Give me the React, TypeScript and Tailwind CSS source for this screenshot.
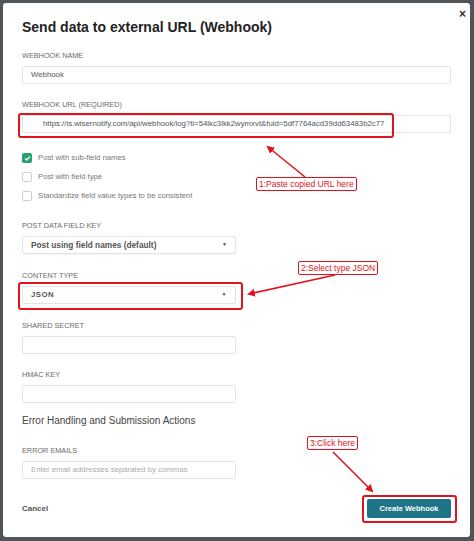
import React from 'react';

const label = 'block text-[7.3px] leading-[12px] uppercase text-[#6b6b6b]';
const input = 'h-[18px] border border-[#e4e4e4] rounded-[2px] bg-white px-2 flex items-center text-[7.8px] text-[#555]';

function Caret() {
  return <span className="ml-auto text-[5px] text-[#444]">▼</span>;
}

function Check({ on, text }: { on?: boolean; text: string }) {
  return (
    <div className="flex items-center h-[12px]">
      <span
        className={
          on
            ? 'w-[10px] h-[10px] rounded-[2px] bg-[#27a16e] flex items-center justify-center'
            : 'w-[10px] h-[10px] rounded-[2px] border border-[#cfcfcf] bg-white'
        }
      >
        {on && (
          <svg width="7" height="7" viewBox="0 0 10 10" fill="none" stroke="white" strokeWidth={2} strokeLinecap="round" strokeLinejoin="round">
            <path d="M2 5.3l2 2 4-4.6" />
          </svg>
        )}
      </span>
      <span className="ml-[6px] text-[7.7px] text-[#777]">{text}</span>
    </div>
  );
}

function Note({ text, className }: { text: string; className: string }) {
  return (
    <div className={`absolute h-[14px] px-[2px] flex items-center bg-white border-[1.5px] border-[#e0141e] rounded-[2px] text-[8.5px] text-[#e0141e] whitespace-nowrap ${className}`}>
      {text}
    </div>
  );
}

export default function App() {
  return (
    <div
      className="relative w-[474px] h-[541px] bg-[#50555a] p-[3px] overflow-hidden"
      style={{ fontFamily: '"Liberation Sans", Arial, sans-serif' }}
    >
      <div className="relative h-[534px] w-[467px] bg-white rounded-[3px] pt-[14px] px-[19px]">
        <span className="absolute right-[4px] top-[2px] text-[12px] font-bold text-[#333]">×</span>

        <h1 className="text-[14px] leading-[20px] font-bold text-[#222]">Send data to external URL (Webhook)</h1>

        <span className={`${label} mt-[13px]`}>Webhook Name</span>
        <div className={`${input} mt-[4px]`}>Webhook</div>

        <span className={`${label} mt-[15px]`}>Webhook URL (Required)</span>
        <div className={`${input} mt-[4px] pl-[20px] text-[#444]`}>
          https://is.wisernotify.com/api/webhook/log?ti=54lkc3lkk2wymxvt&amp;fuid=5df7764acd39dd63483b2c77
        </div>

        <div className="mt-[19px] flex flex-col gap-[7px]">
          <Check on text="Post with sub-field names" />
          <Check text="Post with field type" />
          <Check text="Standardize field value types to be consistent" />
        </div>

        <span className={`${label} mt-[18px]`}>Post Data Field Key</span>
        <div className={`${input} mt-[4px] w-[214px] text-[8.3px] text-[#333] font-bold shadow-[0_1px_1px_rgba(0,0,0,0.04)]`}>
          Post using field names (default)
          <Caret />
        </div>

        <span className={`${label} mt-[16px]`}>Content Type</span>
        <div className={`${input} mt-[4px] w-[214px] border-[#d6d6d6] bg-[#fafafa] text-[#333] font-bold tracking-[0.5px]`}>
          JSON
          <Caret />
        </div>

        <span className={`${label} mt-[16px]`}>Shared Secret</span>
        <div className={`${input} mt-[4px] w-[214px]`} />

        <span className={`${label} mt-[15px]`}>HMAC Key</span>
        <div className={`${input} mt-[4px] w-[214px]`} />

        <h2 className="mt-[10px] text-[10px] leading-[16px] text-[#444]">Error Handling and Submission Actions</h2>

        <span className={`${label} mt-[16px]`}>Error Emails</span>
        <div className={`${input} mt-[4px] w-[214px] text-[7.6px] text-[#aaa]`}>Enter email addresses separated by commas</div>

        <div className="mt-[20px] flex items-center justify-between">
          <span className="text-[8px] font-bold text-[#555]">Cancel</span>
          <button className="h-[19px] w-[84px] rounded-[2px] bg-[#1f7488] text-white text-[7.5px] font-bold">Create Webhook</button>
        </div>
      </div>

      {/* annotation overlay */}
      <div className="absolute left-[18px] top-[113px] w-[376px] h-[25px] border-2 border-[#e0141e] rounded-[3px]" />
      <div className="absolute left-[18px] top-[282px] w-[225px] h-[28px] border-2 border-[#e0141e] rounded-[3px]" />
      <div className="absolute left-[362px] top-[495px] w-[95px] h-[28px] border-2 border-[#e0141e] rounded-[3px]" />

      <svg className="absolute left-0 top-0" width="474" height="541" viewBox="0 0 474 541">
        <defs>
          <marker id="ah" markerWidth="8" markerHeight="8" refX="6" refY="4" orient="auto" markerUnits="userSpaceOnUse">
            <path d="M0 0L8 4L0 8z" fill="#e0141e" />
          </marker>
        </defs>
        <line x1="305" y1="177" x2="268" y2="147" stroke="#e0141e" strokeWidth={1.6} markerEnd="url(#ah)" />
        <line x1="335" y1="275" x2="249" y2="294" stroke="#e0141e" strokeWidth={1.6} markerEnd="url(#ah)" />
        <line x1="333" y1="452" x2="372" y2="491" stroke="#e0141e" strokeWidth={1.6} markerEnd="url(#ah)" />
      </svg>

      <Note text="1:Paste copied URL here" className="left-[256px] top-[177px]" />
      <Note text="2:Select type JSON" className="left-[298px] top-[261px]" />
      <Note text="3:Click here" className="left-[307px] top-[436px]" />
    </div>
  );
}
